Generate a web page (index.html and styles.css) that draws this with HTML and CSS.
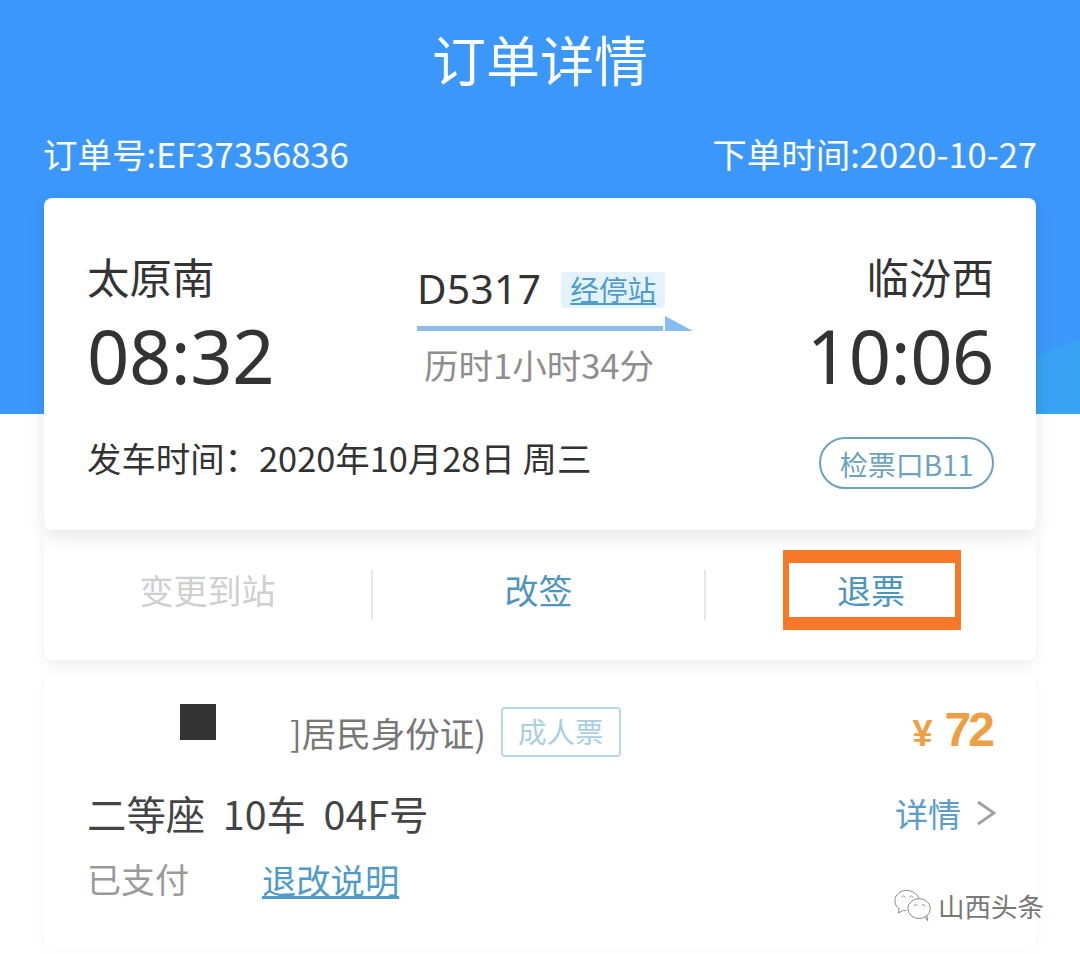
FILE: index.html
```html
<!DOCTYPE html>
<html lang="zh-CN">
<head>
<meta charset="utf-8">
<title>订单详情</title>
<link rel="stylesheet" href="styles.css">
</head>
<body>
<div class="page">
  <div class="hero"></div>
  <header class="title">订单详情</header>
  <div class="order-row"><span>订单号:EF37356836</span><span>下单时间:2020-10-27</span></div>
  <main class="stack">
    <section class="card trip">
      <div class="route">
        <div class="stop">
          <div class="station">太原南</div>
          <div class="time">08:32</div>
        </div>
        <div class="mid">
          <div class="train"><span class="code">D5317</span><span class="stops">经停站</span></div>
          <svg class="arrow" width="276" height="18" viewBox="0 0 276 18"><rect x="0" y="10" width="246" height="5" fill="#8dbde9"/><polygon points="248,0 276,15 248,15" fill="#83bdf3"/></svg>
          <div class="duration">历时1小时34分</div>
        </div>
        <div class="stop end">
          <div class="station">临汾西</div>
          <div class="time">10:06</div>
        </div>
      </div>
      <div class="date-row">
        <span class="date">发车时间：2020年10月28日 周三</span>
        <span class="gate">检票口B11</span>
      </div>
    </section>
    <section class="card actions">
      <div class="action off">变更到站</div>
      <div class="action on">改签</div>
      <div class="action on marked">退票</div>
    </section>
    <section class="card passenger">
      <div class="p-row">
        <div class="p-name"><span class="redact"></span><span class="id">]居民身份证)</span><span class="kind">成人票</span></div>
        <div class="price"><span class="yen">¥</span>72</div>
      </div>
      <div class="seat-row">
        <span class="seat">二等座&nbsp; 10车&nbsp; 04F号</span>
        <span class="detail">详情<svg class="chev" width="20" height="26" viewBox="0 0 20 26"><path d="M2 2 L18 13 L2 24" fill="none" stroke="#a0a0a0" stroke-width="2.8"/></svg></span>
      </div>
      <div class="pay-row"><span class="paid">已支付</span><span class="rules">退改说明</span></div>
    </section>
  </main>
  <div class="mark">
    <svg width="38" height="34" viewBox="0 0 44 38" fill="none" stroke="#777" stroke-width="1"><path d="M15 1C7 1 1 6 1 13c0 4 2 7 5 9l-1 5 6-3c1 0 2 .5 3 .5"/><path d="M15 1c6 0 12 4 14 9"/><ellipse cx="29" cy="22" rx="13" ry="11.5"/><path d="M36 32l3 4-1-6"/><path d="M9 9l2-2 2 2M18 9l2-2 2 2M23 19l2-2 2 2M32 19l2-2 2 2"/></svg>
    <span>山西头条</span>
  </div>
</div>
</body>
</html>
```
FILE: styles.css
```css
*, *::after { box-sizing: border-box; }
html, body { margin: 0; padding: 0; }
body {
  background: #fff;
  font-family: "Noto Sans CJK SC", "Noto Sans", sans-serif;
  color: #333;
}
.page {
  position: relative;
  width: 1080px;
  height: 954px;
  overflow: hidden;
}
.hero {
  position: absolute;
  left: 0;
  top: 0;
  width: 1080px;
  height: 414px;
  background: linear-gradient(156.7deg, #3c97fa 0%, #3c97fa 91.3%, #37a3f2 91.4%, #37a3f2 100%);
}
.title {
  position: relative;
  height: 124px;
  padding-top: 20px;
  text-align: center;
  color: #fff;
  font-size: 54px;
  line-height: 78px;
}
.order-row {
  position: relative;
  display: flex;
  justify-content: space-between;
  height: 74px;
  padding: 4px 43px 0 43px;
  color: #fff;
  font-size: 34.5px;
  line-height: 50px;
}
.stack {
  position: relative;
  display: flex;
  flex-direction: column;
  margin: 0 44px;
}
.card {
  background: #fff;
  border-radius: 8px;
}
.trip {
  height: 332px;
  padding: 48px 42px 0 43px;
  box-shadow: 0 8px 18px rgba(0, 0, 0, 0.09);
  z-index: 2;
}
.route {
  display: flex;
  justify-content: space-between;
  height: 148px;
}
.stop { width: 190px; }
.stop.end { text-align: right; margin-left: -30px; }
.station {
  font-size: 42.5px;
  line-height: 60px;
}
.time {
  font-family: "Noto Sans", sans-serif;
  font-size: 74px;
  line-height: 92px;
  margin-top: 4px;
  letter-spacing: -0.4px;
  white-space: nowrap;
}
.mid {
  width: 276px;
  margin-left: -1px;
  margin-top: 14px;
}
.train {
  display: flex;
  align-items: center;
  height: 52px;
  white-space: nowrap;
}
.code {
  font-family: "Noto Sans", sans-serif;
  font-size: 40.5px;
  letter-spacing: 0.4px;
  margin-top: 4px;
}
.stops {
  margin-left: 20px;
  margin-top: 8px;
  padding: 0 9px;
  height: 36px;
  line-height: 34px;
  background: #e4f2fb;
  border-radius: 4px;
  color: #4f9dcb;
  font-size: 28.7px;
  text-decoration: underline;
}
.arrow { display: block; margin-top: 4px; }
.duration {
  padding-left: 7px;
  color: #8e8e8e;
  font-size: 34.5px;
  line-height: 50px;
  white-space: nowrap;
  margin-top: 5px;
}
.date-row {
  display: flex;
  justify-content: space-between;
  align-items: center;
  margin-top: 43px;
}
.date {
  font-size: 34.4px;
  line-height: 50px;
  margin-top: -12px;
}
.gate {
  width: 175px;
  height: 52px;
  border: 2px solid #6ba3bd;
  border-radius: 26px;
  color: #6ba3bd;
  font-size: 28px;
  line-height: 50px;
  text-align: center;
}
.actions {
  display: grid;
  grid-template-columns: 329px 333px 330px;
  align-items: center;
  height: 130px;
  box-shadow: 0 6px 14px rgba(0, 0, 0, 0.06);
  z-index: 1;
}
.action {
  position: relative;
  height: 50px;
  font-size: 34px;
  line-height: 40px;
  text-align: center;
  border-right: 2px solid #e6e6e6;
}
.action:last-child { border-right: 0; }
.off { color: #cfcfcf; }
.on { color: #4e95bd; }
.marked::after {
  content: "";
  position: absolute;
  left: 77px;
  top: -20px;
  width: 178px;
  height: 80px;
  border: solid #f8782a;
  border-width: 13px 6px;
}
.passenger {
  height: 275px;
  margin-top: 15px;
  padding: 30px 42px 0 43px;
  box-shadow: 0 0 12px rgba(0, 0, 0, 0.03);
}
.p-row {
  display: flex;
  justify-content: space-between;
  align-items: center;
  height: 54px;
}
.p-name { display: flex; align-items: center; position: relative; }
.redact {
  width: 36px;
  height: 36px;
  margin-left: 93px;
  margin-top: -20px;
  background: #333;
}
.id {
  margin-left: 74px;
  color: #777;
  font-size: 34.5px;
}
.kind {
  margin-left: 15px;
  width: 120px;
  height: 50px;
  border: 2px solid #b5d8e8;
  border-radius: 4px;
  color: #a8cfe2;
  font-size: 28.5px;
  line-height: 44px;
  text-align: center;
}
.price {
  font-size: 48px;
  font-weight: 700;
  color: #ee9f45;
  line-height: 54px;
  letter-spacing: -3px;
  padding-right: 2px;
  font-family: "Liberation Sans", sans-serif;
}
.yen { font-size: 36px; margin-right: 12px; letter-spacing: 0; }
.seat-row {
  display: flex;
  justify-content: space-between;
  align-items: center;
  margin-top: 28px;
  height: 52px;
}
.seat { font-size: 39.4px; line-height: 52px; color: #444; }
.detail {
  display: flex;
  align-items: center;
  gap: 15px;
  margin-right: -2px;
  color: #5b9dc9;
  font-size: 33px;
}
.pay-row { display: flex; margin-top: 15px; }
.paid { color: #9a9a9a; font-size: 34px; line-height: 50px; width: 175px; }
.rules {
  color: #4e9bcb;
  font-size: 34.3px;
  line-height: 50px;
  text-decoration: underline;
}
.mark {
  position: absolute;
  left: 894px;
  top: 886px;
  display: flex;
  align-items: center;
  gap: 6px;
  color: #777;
  font-size: 26.5px;
  line-height: 40px;
}
```
